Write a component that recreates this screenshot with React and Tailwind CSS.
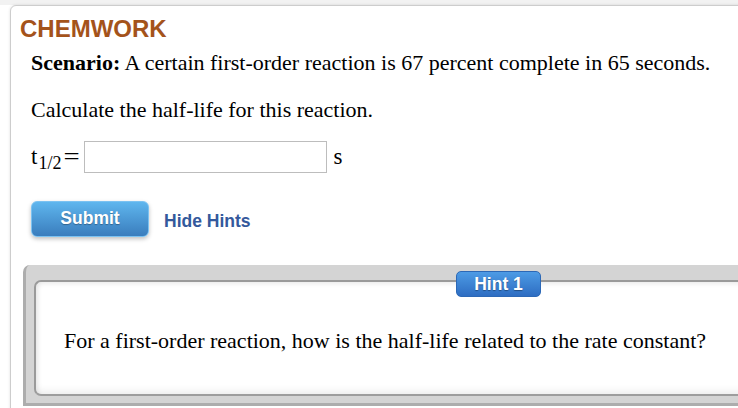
import React from "react";

export default function App() {
  const serif = { fontFamily: '"Liberation Serif", "Times New Roman", serif' };
  const sans = { fontFamily: '"Liberation Sans", Arial, sans-serif' };
  return (
    <div className="relative w-[738px] h-[408px] overflow-hidden bg-white">
      <div className="h-[5px] bg-[#f2f2f2]" />
      <div className="ml-[10px] w-[780px] h-[420px] border border-[#cdcdcd] rounded-tl-[6px] shadow-[0_0_3px_rgba(0,0,0,0.12)] bg-white pt-[8px]">
        <div
          className="ml-[9px] text-[24px] leading-[29px] font-bold text-[#a4531b]"
          style={sans}
        >
          CHEMWORK
        </div>
        <div className="ml-[20px] text-black" style={serif}>
          <p className="mt-[7px] text-[22px] leading-[26px]">
            <b>Scenario:</b> A certain first-order reaction is 67 percent complete in 65 seconds.
          </p>
          <p className="mt-[21px] text-[22px] leading-[26px]">
            Calculate the half-life for this reaction.
          </p>
          <div className="mt-[18px] flex items-center h-[32px]" style={serif}>
            <span className="text-[23px] leading-[26px] flex items-baseline" style={serif}>
              <span>t</span>
              <span className="text-[18px] leading-none relative top-[5px] ml-[1px]" style={serif}>1/2</span>
              <span className="ml-[4px] inline-block scale-x-[1.25]">=</span>
            </span>
            <div className="ml-[6px] w-[243px] h-[32px] border border-[#bdbdbd] bg-white" />
            <span className="ml-[6px] text-[23px] leading-[26px]" style={serif}>s</span>
          </div>
          <div className="mt-[28px] flex items-center">
            <div
              className="w-[118px] h-[36px] rounded-[6px] border border-[#7cc2f1] bg-gradient-to-b from-[#5fb6ee] to-[#3a7dbd] shadow-[0_2px_4px_rgba(0,0,0,0.25)] flex items-center justify-center text-white font-bold text-[17.5px] [text-shadow:0_1px_1px_rgba(0,0,0,0.3)] pb-[1px]"
              style={sans}
            >
              Submit
            </div>
            <span
              className="ml-[15px] mt-[5px] text-[#34599c] font-bold text-[17.5px]"
              style={sans}
            >
              Hide Hints
            </span>
          </div>
        </div>
        <div className="relative mt-[28px] ml-[12px] h-[141px] bg-[#d4d4d4] rounded-tl-[7px] border-l-[3px] border-b-[3px] border-[#adadad] pt-[15px] pl-[8px]">
          <div className="h-[116px] bg-white rounded-l-[7px] border-t-2 border-l-2 border-b-2 border-t-[#9a9a9a] border-l-[#9a9a9a] border-b-[#9d9d9d] shadow-[inset_0_-4px_6px_rgba(0,0,0,0.06),inset_2px_2px_4px_rgba(0,0,0,0.08)] pt-[46px] pl-[28px]">
            <p className="text-[22px] leading-[26px] text-black" style={serif}>
              For a first-order reaction, how is the half-life related to the rate constant?
            </p>
          </div>
          <div
            className="absolute left-[430px] top-[6px] w-[85px] h-[26px] rounded-[5px] border border-[#2c68b6] bg-gradient-to-b from-[#4d9be5] to-[#2e6dc2] flex items-center justify-center text-white font-bold text-[17.5px] [text-shadow:0_1px_1px_rgba(0,0,0,0.35)]"
            style={sans}
          >
            Hint 1
          </div>
        </div>
      </div>
    </div>
  );
}
